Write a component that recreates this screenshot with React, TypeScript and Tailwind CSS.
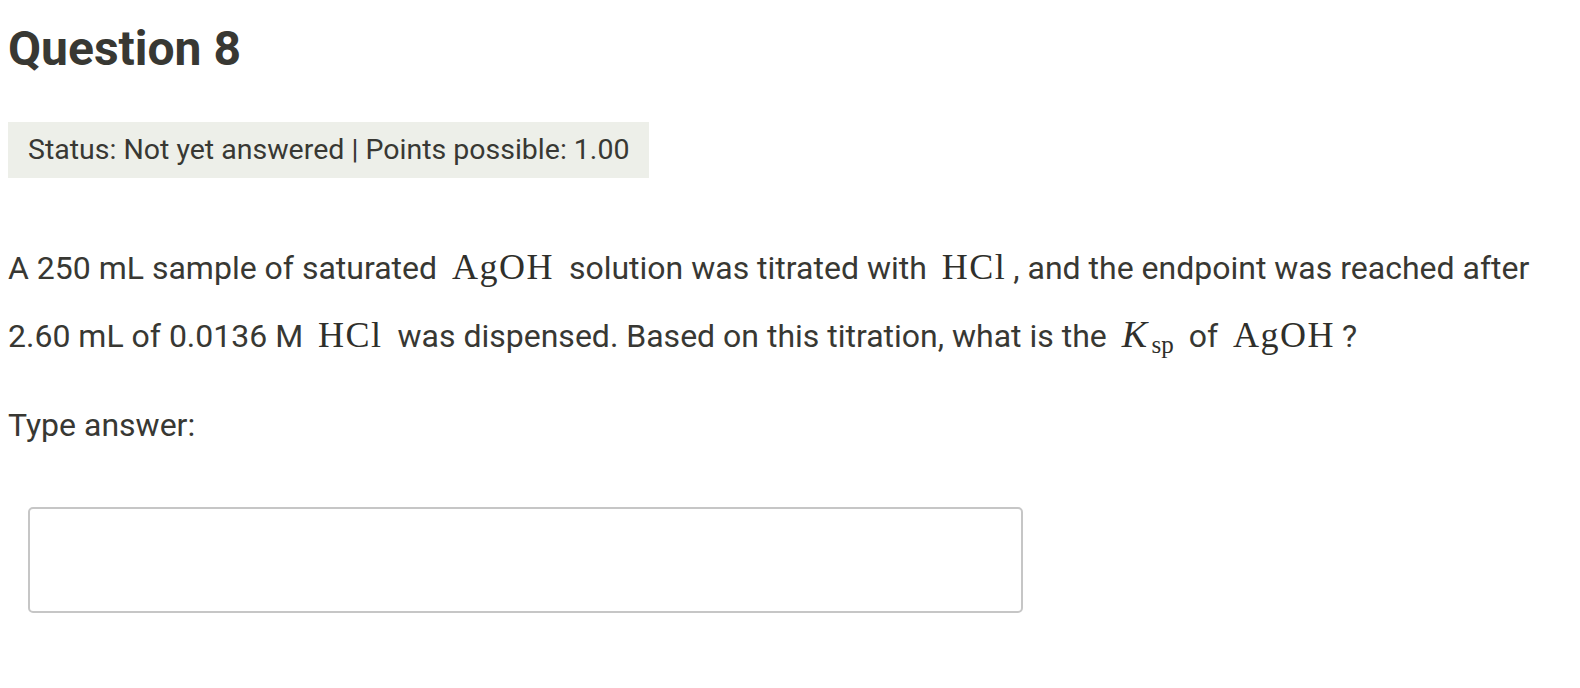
function M({ children }: { children: React.ReactNode }) {
  return (
    <span className="mx-[7px] font-['Liberation_Serif',serif] text-[36px] leading-none tracking-[1.5px] text-[#2f2f2b]">
      {children}
    </span>
  );
}

export default function App() {
  return (
    <div className="min-h-screen bg-white px-2 font-['Roboto',sans-serif] text-[#383833]">
      <h2 className="pt-[21px] text-[48px] font-bold leading-[56px]">Question 8</h2>

      <div className="mt-[45px] inline-block bg-[#edefe9] px-5 py-3 text-[28.5px] leading-8">
        Status: Not yet answered | Points possible: 1.00
      </div>

      <p className="mt-[56px] whitespace-nowrap text-[32px] leading-[68px]">
        A 250 mL sample of saturated <M>AgOH</M> solution was titrated with <M>HCl</M>, and the endpoint was
        reached after
        <br />
        2.60 mL of 0.0136 M <M>HCl</M> was dispensed. Based on this titration, what is the{" "}
        <M>
          <i className="text-[38px]">K</i>
          <sub className="ml-[3px] text-[25px] tracking-normal">sp</sub>
        </M>{" "}
        of <M>AgOH</M>?
      </p>

      <p className="mt-[35px] text-[32px] leading-10">Type answer:</p>

      <div className="ml-5 mt-[62px] h-[106px] w-[995px] rounded-[5px] border-2 border-[#c6c6c6]" />
    </div>
  );
}
